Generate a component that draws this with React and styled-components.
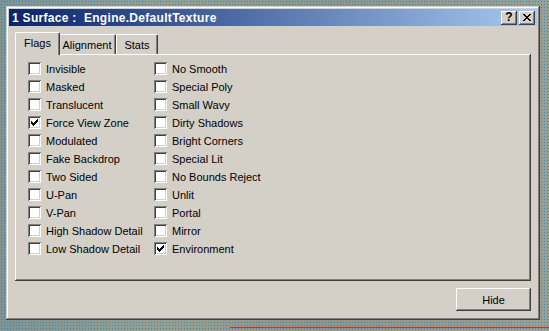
import React, { useState } from "react";
import styled, { createGlobalStyle } from "styled-components";

const face = "#d4d0c8";

const GlobalStyle = createGlobalStyle`
  html, body {
    margin: 0;
    padding: 0;
    width: 549px;
    height: 331px;
    overflow: hidden;
  }
  body {
    background:
      linear-gradient(#c4322c, #c4322c) 230px 327px / 319px 1px no-repeat,
      radial-gradient(circle at 1.5px 1.5px, #2b86e8 0.7px, transparent 0.9px) 0 0 / 3px 3px,
      linear-gradient(90deg, #7f948f, #98a08c 30%, #8e9684 60%, #9ba190);
    font-family: "Liberation Sans", Arial, sans-serif;
  }
`;

const leftFlags = [
  "Invisible",
  "Masked",
  "Translucent",
  "Force View Zone",
  "Modulated",
  "Fake Backdrop",
  "Two Sided",
  "U-Pan",
  "V-Pan",
  "High Shadow Detail",
  "Low Shadow Detail",
];

const rightFlags = [
  "No Smooth",
  "Special Poly",
  "Small Wavy",
  "Dirty Shadows",
  "Bright Corners",
  "Special Lit",
  "No Bounds Reject",
  "Unlit",
  "Portal",
  "Mirror",
  "Environment",
];

const tabs = [
  { name: "Flags", w: 41 },
  { name: "Alignment", w: 58 },
  { name: "Stats", w: 42 },
];

const CheckMark = () => (
  <svg width="7" height="7" viewBox="0 0 7 7" shapeRendering="crispEdges">
    <path
      fill="#000"
      d="M0 2h1v3h-1z M1 3h1v3h-1z M2 4h1v3h-1z M3 3h1v3h-1z M4 2h1v3h-1z M5 1h1v3h-1z M6 0h1v3h-1z"
    />
  </svg>
);

const CloseGlyph = () => (
  <svg width="8" height="7" viewBox="0 0 8 7" shapeRendering="crispEdges">
    <path
      fill="#000"
      d="M0 0h2v1h-2z M6 0h2v1h-2z M1 1h2v1h-2z M5 1h2v1h-2z M2 2h4v1h-4z M3 3h2v1h-2z M2 4h4v1h-4z M1 5h2v1h-2z M5 5h2v1h-2z M0 6h2v1h-2z M6 6h2v1h-2z"
    />
  </svg>
);

const App = () => {
  const [checked, setChecked] = useState({
    "Force View Zone": true,
    Environment: true,
  });
  const [active, setActive] = useState("Flags");

  const toggle = (name) => {
    setChecked({ ...checked, [name]: !checked[name] });
  };

  return (
    <>
      <GlobalStyle />
      <Window>
        <TitleBar>
          <Title>1 Surface :&nbsp; Engine.DefaultTexture</Title>
          <CaptionButtons>
            <CaptionButton>?</CaptionButton>
            <CaptionButton>
              <CloseGlyph />
            </CaptionButton>
          </CaptionButtons>
        </TitleBar>

        <Body>
          <TabStrip>
            {tabs.map((t) => (
              <Tab
                key={t.name}
                $w={t.w}
                $active={active === t.name}
                onClick={() => setActive(t.name)}
              >
                {t.name}
              </Tab>
            ))}
          </TabStrip>

          <Panel>
            <FlagGrid>
              {[...leftFlags, ...rightFlags].map((name) => (
                <FlagRow key={name} onClick={() => toggle(name)}>
                  <Box>{checked[name] && <CheckMark />}</Box>
                  <Label>{name}</Label>
                </FlagRow>
              ))}
            </FlagGrid>
          </Panel>

          <Footer>
            <Button>Hide</Button>
          </Footer>
        </Body>
      </Window>
    </>
  );
};

const Window = styled.div`
  margin: 6px 0 0 6px;
  width: 534px;
  height: 314px;
  box-sizing: border-box;
  background: ${face};
  padding: 3px;
  display: flex;
  flex-direction: column;
  box-shadow: inset -1px -1px #404040, inset 1px 1px ${face},
    inset -2px -2px #808080, inset 2px 2px #fff;
`;

const TitleBar = styled.div`
  height: 18px;
  display: flex;
  align-items: center;
  justify-content: space-between;
  padding: 0 2px 0 3px;
  background: linear-gradient(90deg, #0a246a, #a6caf0);
`;

const Title = styled.div`
  color: #fff;
  font-weight: bold;
  font-size: 12px;
  letter-spacing: 0.3px;
  white-space: pre;
`;

const CaptionButtons = styled.div`
  display: flex;
  gap: 2px;
`;

const RaisedButton = styled.button`
  box-sizing: border-box;
  border: none;
  background: ${face};
  padding: 0;
  font-family: "Liberation Sans", Arial, sans-serif;
  color: #000;
  display: flex;
  align-items: center;
  justify-content: center;
  box-shadow: inset -1px -1px #404040, inset 1px 1px #fff,
    inset -2px -2px #808080, inset 2px 2px ${face};
`;

const CaptionButton = styled(RaisedButton)`
  width: 16px;
  height: 14px;
  font-weight: bold;
  font-size: 12px;
  line-height: 14px;
  padding-bottom: 1px;
`;

const Body = styled.div`
  flex: 1;
  display: flex;
  flex-direction: column;
  padding: 6px 6px 6px 6px;
`;

const TabStrip = styled.div`
  display: flex;
  align-items: flex-end;
  height: 22px;
  padding-left: 2px;
  position: relative;
  z-index: 1;
`;

const Tab = styled.div`
  box-sizing: border-box;
  width: ${(p) => (p.$active ? p.$w + 4 : p.$w)}px;
  height: ${(p) => (p.$active ? 23 : 20)}px;
  margin: 0 ${(p) => (p.$active ? -2 : 0)}px
    ${(p) => (p.$active ? -1 : 0)}px;
  position: relative;
  z-index: ${(p) => (p.$active ? 2 : 1)};
  background: ${face};
  font-size: 11px;
  color: #000;
  display: flex;
  align-items: ${(p) => (p.$active ? "flex-start" : "center")};
  padding-top: ${(p) => (p.$active ? 4 : 1)}px;
  justify-content: center;
  border-top: 1px solid #fff;
  border-left: 1px solid #fff;
  border-right: 1px solid #404040;
  border-top-left-radius: 2px;
  border-top-right-radius: 2px;
  box-shadow: inset -1px 0 #808080;
  cursor: default;
`;

const Panel = styled.div`
  box-sizing: border-box;
  height: 227px;
  background: ${face};
  padding: 6px 0 0 13px;
  box-shadow: inset -1px -1px #404040, inset 1px 1px #fff,
    inset -2px -2px #808080;
`;

const FlagGrid = styled.div`
  display: grid;
  grid-auto-flow: column;
  grid-template-rows: repeat(11, 18px);
  grid-template-columns: 126px auto;
  justify-content: start;
`;

const FlagRow = styled.div`
  display: flex;
  align-items: center;
  gap: 5px;
  cursor: default;
`;

const Box = styled.span`
  box-sizing: border-box;
  width: 13px;
  height: 13px;
  flex: none;
  background: #fff;
  display: flex;
  align-items: center;
  justify-content: center;
  box-shadow: inset 1px 1px #808080, inset -1px -1px #fff,
    inset 2px 2px #404040, inset -2px -2px ${face};
  margin-top: -1px;
`;

const Label = styled.span`
  font-size: 11px;
  color: #000;
  white-space: nowrap;
`;

const Footer = styled.div`
  display: flex;
  justify-content: flex-end;
  margin-top: 7px;
`;

const Button = styled(RaisedButton)`
  width: 75px;
  height: 23px;
  font-size: 11px;
`;

export default App;
